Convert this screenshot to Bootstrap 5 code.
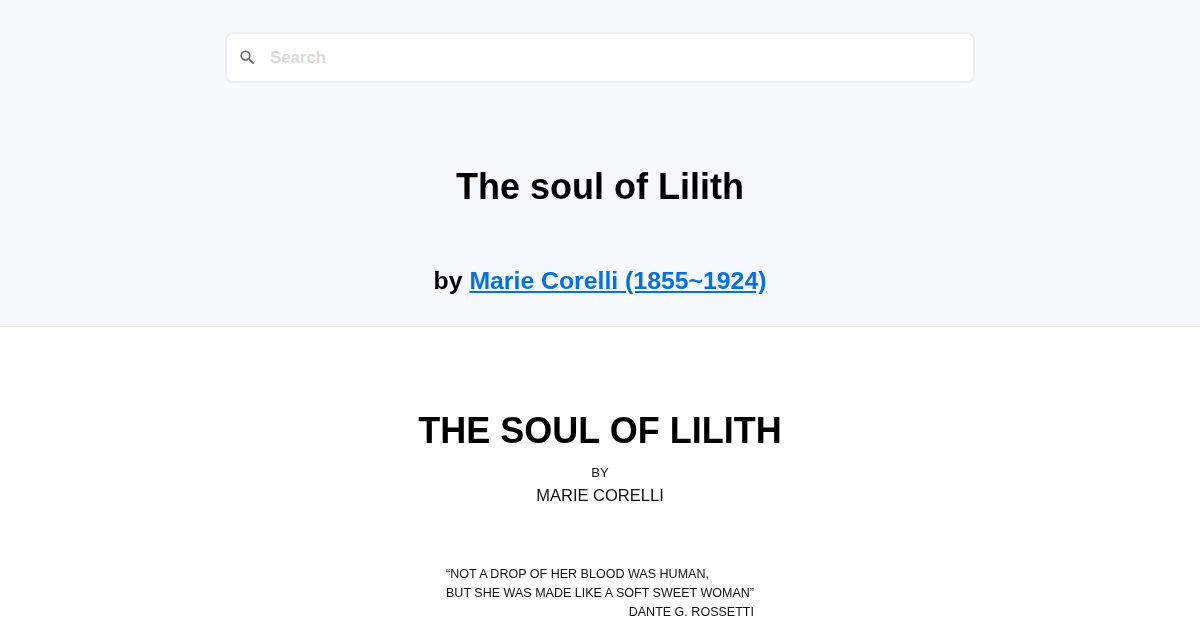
<!DOCTYPE html>
<html lang="en">
<head>
<meta charset="utf-8">
<title>The soul of Lilith</title>
<link href="https://cdn.jsdelivr.net/npm/bootstrap@5.3.0/dist/css/bootstrap.min.css" rel="stylesheet">
<style>
html, body { height: 628px; overflow: hidden; }
body { font-family: "Liberation Sans", Arial, sans-serif; color: #000; background: #fff; will-change: opacity; }
.top-band { background: #f7f8fa; border-bottom: 1px solid #e4e6e9; height: 327px; padding-top: 32px; }
.search-box { width: 750px; height: 51px; background: #fff; border: 2px solid #eceef1; border-radius: 8px; padding-left: 11px; }
.search-box svg { width: 19px; height: 19px; flex: none; fill: #666; }
.search-input { border: 0; outline: 0; background: transparent; width: 100%; margin-left: 13px; font-size: 16.8px; font-weight: 700; font-family: inherit; padding: 0; }
.search-input::placeholder { color: #d9d9d9; opacity: 1; }
.band-title { font-size: 36px; font-weight: 700; line-height: 42px; margin: 83px 0 0; }
.band-by { font-size: 24.8px; font-weight: 700; line-height: 28px; margin: 59px 0 0; }
.band-by a { color: #0070f3; }
.book-title { font-size: 36px; font-weight: 700; line-height: 42px; margin: 83px 0 0; }
.book-by { font-size: 13px; line-height: 16px; margin: 13px 0 0; color: #111; }
.book-author { font-size: 16.5px; line-height: 21px; margin: 4px 0 0; color: #111; }
.epigraph { width: 308px; margin: 59px auto 0; font-size: 12.54px; line-height: 19px; color: #111; text-align: left; white-space: nowrap; }
</style>
</head>
<body>
<header class="top-band text-center">
  <div class="search-box d-flex align-items-center mx-auto">
    <svg viewBox="0 0 24 24" aria-hidden="true"><path d="M15.5 14h-.79l-.28-.27A6.47 6.47 0 0 0 16 9.5 6.5 6.5 0 1 0 9.5 16c1.61 0 3.09-.59 4.23-1.57l.27.28v.79l5 4.99L20.49 19l-4.99-5zm-6 0C7.01 14 5 11.99 5 9.5S7.01 5 9.5 5 14 7.01 14 9.5 11.99 14 9.5 14z"/></svg>
    <input class="search-input" type="text" placeholder="Search">
  </div>
  <h1 class="band-title">The soul of Lilith</h1>
  <p class="band-by">by <a href="#">Marie Corelli (1855~1924)</a></p>
</header>
<main class="text-center">
  <h2 class="book-title">THE SOUL OF LILITH</h2>
  <p class="book-by">BY</p>
  <p class="book-author">MARIE CORELLI</p>
  <div class="epigraph">
    <div>“NOT A DROP OF HER BLOOD WAS HUMAN,</div>
    <div>BUT SHE WAS MADE LIKE A SOFT SWEET WOMAN”</div>
    <div class="text-end">DANTE G. ROSSETTI</div>
  </div>
</main>
<script src="https://cdn.jsdelivr.net/npm/bootstrap@5.3.0/dist/js/bootstrap.bundle.min.js"></script>
</body>
</html>
